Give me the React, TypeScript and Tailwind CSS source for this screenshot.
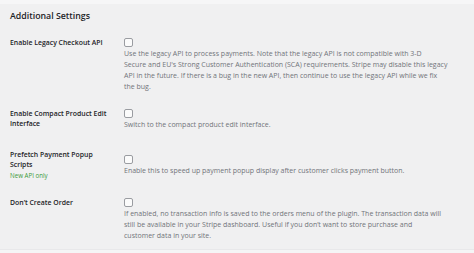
import type { ReactNode } from 'react'

interface SettingRow {
  id: string
  label: string
  note?: string
  description: ReactNode
  rowClass: string
  cellClass?: string
}

const rows: SettingRow[] = [
  {
    id: 'legacy',
    label: 'Enable Legacy Checkout API',
    description: (
      <>
        Use the legacy API to process payments. Note that the legacy API is not compatible with 3-D
        <br />
        Secure and EU's Strong Customer Authentication (SCA) requirements. Stripe may disable this legacy
        <br />
        API in the future. If there is a bug in the new API, then continue to use the legacy API while we fix
        <br />
        the bug.
      </>
    ),
    rowClass: 'mt-[15px]'
  },
  {
    id: 'compact',
    label: 'Enable Compact Product Edit Interface',
    description: 'Switch to the compact product edit interface.',
    rowClass: 'mt-[17px]'
  },
  {
    id: 'prefetch',
    label: 'Prefetch Payment Popup Scripts',
    note: 'New API only',
    description: 'Enable this to speed up payment popup display after customer clicks payment button.',
    rowClass: 'mt-[20px]',
    cellClass: 'pt-[5px]'
  },
  {
    id: 'no-order',
    label: "Don\u2019t Create Order",
    description:
      "If enabled, no transaction info is saved to the orders menu of the plugin. The transaction data will still be available in your Stripe dashboard. Useful if you don\u2019t want to store purchase and customer data in your site.",
    rowClass: 'mt-[17px]'
  }
]

export default function App() {
  return (
    <div
      className="w-[474px] h-[253px] overflow-hidden bg-[#f0f0f1] text-[#1d2327] flex flex-col"
      style={{ fontFamily: '"Open Sans", "Noto Sans", sans-serif' }}
    >
      <div className="h-[4px] bg-[#f6f6f7] shrink-0" />
      <div className="flex-1 pl-[10px]">
        <h2 className="mt-[5px] text-[8.8px] leading-[14px] font-semibold">
          Additional Settings
        </h2>

        {rows.map(row => (
          <div key={row.id} className={`flex items-start ${row.rowClass}`}>
            {/* label column */}
            <div className="w-[114px] shrink-0 pr-[10px]">
              <label
                htmlFor={row.id}
                className="block text-[6.9px] leading-[10px] font-semibold"
              >
                {row.label}
              </label>
              {row.note && (
                <div className="mt-[1px] text-[6.2px] leading-[10px] text-[#3a9a3a]">{row.note}</div>
              )}
            </div>

            {/* field column */}
            <div className={`w-[320px] ${row.cellClass ?? ''}`}>
              <input
                id={row.id}
                type="checkbox"
                className="block appearance-none w-[9px] h-[9px] border border-[#9a9ca1] rounded-[2px] bg-[#fbfbfb]"
              />
              <p className="mt-[1px] text-[7px] leading-[11px] text-[#70747a] whitespace-normal [&:has(br)]:whitespace-nowrap">
                {row.description}
              </p>
            </div>
          </div>
        ))}
      </div>
      <div className="h-[4px] bg-[#f5f5f6] border-t border-[#e8e8ea] shrink-0" />
    </div>
  )
}
